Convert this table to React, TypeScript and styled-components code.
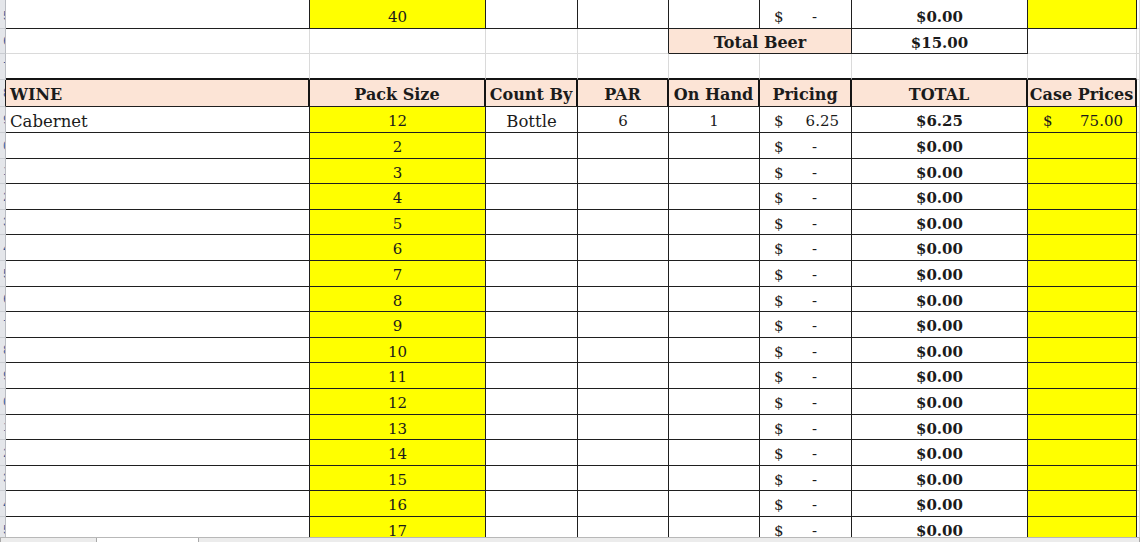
import React from "react";
import styled, { createGlobalStyle } from "styled-components";

type Line = "g" | "t" | "k" | "n";
type Fill = "w" | "y" | "p";
type Align = "left" | "center" | "stretch";
type Kind = "text" | "num";

const GlobalStyle = createGlobalStyle`
  html, body { margin: 0; padding: 0; background: #ffffff; }
  body { font-family: "DejaVu Serif", "Liberation Serif", serif; color: #1b1b1b; }
`;

const COLS = "6px 304px 176px 92px 91px 91px 92px 176px 109px 1fr";

const lineCss = (l: Line) =>
  l === "g"
    ? "1px solid #dadada"
    : l === "t"
    ? "1px solid #1f1f1f"
    : l === "k"
    ? "2px solid #141414"
    : "none";

const fillCss = (f: Fill) => (f === "y" ? "#ffff00" : f === "p" ? "#fce4d6" : "#ffffff");

const Page = styled.div`
  width: 1140px;
  height: 542px;
  display: flex;
  flex-direction: column;
  overflow: hidden;
`;

const Sheet = styled.div`
  height: 537px;
  overflow: hidden;
  display: flex;
  flex-direction: column;
  flex: none;
`;

const Row = styled.div<{ $h: number }>`
  display: grid;
  grid-template-columns: ${COLS};
  height: ${(p) => p.$h}px;
  flex: none;
`;

const RowHead = styled.div<{ $dark?: boolean }>`
  box-sizing: border-box;
  background: #e4e6ea;
  border-right: 1px solid ${(p) => (p.$dark ? "#1f1f1f" : "#b9bcc2")};
  border-bottom: 1px solid #c9ccd1;
  overflow: hidden;
  display: flex;
  align-items: center;
  justify-content: flex-end;
`;

const RowNum = styled.span`
  font-family: "Liberation Sans", Arial, sans-serif;
  font-size: 12px;
  color: #2f5d9c;
  margin-right: -5px;
`;

const Cell = styled.div<{
  $fill: Fill;
  $r: Line;
  $b: Line;
  $span: number;
  $align: Align;
  $bold: boolean;
  $kind: Kind;
}>`
  grid-column: span ${(p) => p.$span};
  box-sizing: border-box;
  background: ${(p) => fillCss(p.$fill)};
  border-right: ${(p) => lineCss(p.$r)};
  border-bottom: ${(p) => lineCss(p.$b)};
  display: flex;
  align-items: center;
  justify-content: ${(p) => (p.$align === "left" ? "flex-start" : p.$align === "center" ? "center" : "stretch")};
  padding: ${(p) => (p.$align === "left" ? "3px 0 0 4px" : "3px 0 0 0")};
  overflow: hidden;
  white-space: nowrap;
  font-size: ${(p) => (p.$kind === "num" ? 15 : p.$bold ? 16 : 16.5)}px;
  font-weight: ${(p) => (p.$bold ? 700 : 400)};
  color: #1b1b1b;
`;

const Money = styled.div<{ $l: number; $r: number }>`
  box-sizing: border-box;
  width: 100%;
  display: flex;
  justify-content: space-between;
  align-items: center;
  padding: 0 ${(p) => p.$r}px 0 ${(p) => p.$l}px;
`;

const Footer = styled.div`
  flex: none;
  height: 5px;
  display: flex;
  border-top: 1px solid #b8b8b8;
  box-sizing: border-box;
  background: #ffffff;
`;

const Tab = styled.div<{ $w?: number }>`
  box-sizing: border-box;
  height: 100%;
  background: #ececec;
  border-left: 1px solid #a9a9a9;
  border-right: 1px solid #a9a9a9;
  ${(p) => (p.$w ? `width: ${p.$w}px;` : "flex: 1;")}
`;

const TabGap = styled.div`
  width: 101px;
  height: 100%;
  background: #ffffff;
`;

interface CellSpec {
  fill?: Fill;
  r: Line;
  b: Line;
  span?: number;
  align?: Align;
  bold?: boolean;
  kind?: Kind;
  content?: React.ReactNode;
}

interface RowSpec {
  h: number;
  num: string;
  dark?: boolean;
  cells: CellSpec[];
}

const Dash = ({ l, r }: { l: number; r: number }) => (
  <Money $l={l} $r={r}>
    <span>$</span>
    <span>-</span>
  </Money>
);

const Amount = ({ l, r, v }: { l: number; r: number; v: string }) => (
  <Money $l={l} $r={r}>
    <span>$</span>
    <span>{v}</span>
  </Money>
);

const dataRow = (
  h: number,
  num: string,
  a: React.ReactNode,
  b: string,
  rest: Partial<Record<"c" | "d" | "e", string>> & {
    f?: React.ReactNode;
    g?: string;
    hcol?: React.ReactNode;
  }
): RowSpec => ({
  h,
  num,
  cells: [
    { r: "t", b: "t", align: "left", content: a },
    { fill: "y", r: "t", b: "t", kind: "num", content: b },
    { r: "t", b: "t", content: rest.c },
    { r: "t", b: "t", kind: "num", content: rest.d },
    { r: "t", b: "t", kind: "num", content: rest.e },
    { r: "t", b: "t", align: "stretch", kind: "num", content: rest.f ?? <Dash l={14} r={34} /> },
    { r: "t", b: "t", bold: true, kind: "num", content: rest.g ?? "$0.00" },
    { fill: "y", r: "t", b: "t", align: "stretch", kind: "num", content: rest.hcol },
    { r: "g", b: "g" },
  ],
});

const heights = [26, 25, 26, 25, 26];

const rows: RowSpec[] = [
  {
    h: 3,
    num: "",
    cells: [
      { r: "t", b: "t" },
      { fill: "y", r: "t", b: "t" },
      { r: "t", b: "t" },
      { r: "t", b: "t" },
      { r: "t", b: "t" },
      { r: "t", b: "t" },
      { r: "t", b: "t" },
      { fill: "y", r: "t", b: "t" },
      { r: "g", b: "g" },
    ],
  },
  dataRow(26, "5", "", "40", {}),
  {
    h: 25,
    num: "6",
    cells: [
      { r: "g", b: "g" },
      { r: "g", b: "g" },
      { r: "g", b: "g" },
      { r: "t", b: "g" },
      { fill: "p", r: "t", b: "t", span: 2, bold: true, content: "Total Beer" },
      { r: "t", b: "t", bold: true, kind: "num", content: "$15.00" },
      { r: "g", b: "g" },
      { r: "g", b: "g" },
    ],
  },
  {
    h: 26,
    num: "7",
    cells: [
      { r: "g", b: "k" },
      { r: "g", b: "k" },
      { r: "g", b: "k" },
      { r: "g", b: "k" },
      { r: "g", b: "k" },
      { r: "g", b: "k" },
      { r: "g", b: "k" },
      { r: "g", b: "k" },
      { r: "g", b: "g" },
    ],
  },
  {
    h: 27,
    num: "8",
    dark: true,
    cells: [
      { fill: "p", r: "k", b: "t", align: "left", bold: true, content: "WINE" },
      { fill: "p", r: "k", b: "t", bold: true, content: "Pack Size" },
      { fill: "p", r: "k", b: "t", bold: true, content: "Count By" },
      { fill: "p", r: "k", b: "t", bold: true, content: "PAR" },
      { fill: "p", r: "k", b: "t", bold: true, content: "On Hand" },
      { fill: "p", r: "k", b: "t", bold: true, content: "Pricing" },
      { fill: "p", r: "k", b: "t", bold: true, content: "TOTAL" },
      { fill: "p", r: "k", b: "t", bold: true, content: "Case Prices" },
      { r: "g", b: "g" },
    ],
  },
  dataRow(26, "9", "Cabernet", "12", {
    c: "Bottle",
    d: "6",
    e: "1",
    f: <Amount l={14} r={12} v="6.25" />,
    g: "$6.25",
    hcol: <Amount l={15} r={13} v="75.00" />,
  }),
  ...Array.from({ length: 16 }, (_, i) =>
    dataRow(heights[i % 5], String(i % 10), "", String(i + 2), {})
  ),
];

export default function App() {
  return (
    <Page>
      <GlobalStyle />
      <Sheet>
        {rows.map((row, ri) => (
          <Row key={ri} $h={row.h}>
            <RowHead $dark={row.dark}>
              <RowNum>{row.num}</RowNum>
            </RowHead>
            {row.cells.map((c, ci) => (
              <Cell
                key={ci}
                $fill={c.fill ?? "w"}
                $r={c.r}
                $b={c.b}
                $span={c.span ?? 1}
                $align={c.align ?? "center"}
                $bold={!!c.bold}
                $kind={c.kind ?? "text"}
              >
                {c.content}
              </Cell>
            ))}
          </Row>
        ))}
      </Sheet>
      <Footer>
        <Tab $w={97} />
        <TabGap />
        <Tab />
      </Footer>
    </Page>
  );
}
